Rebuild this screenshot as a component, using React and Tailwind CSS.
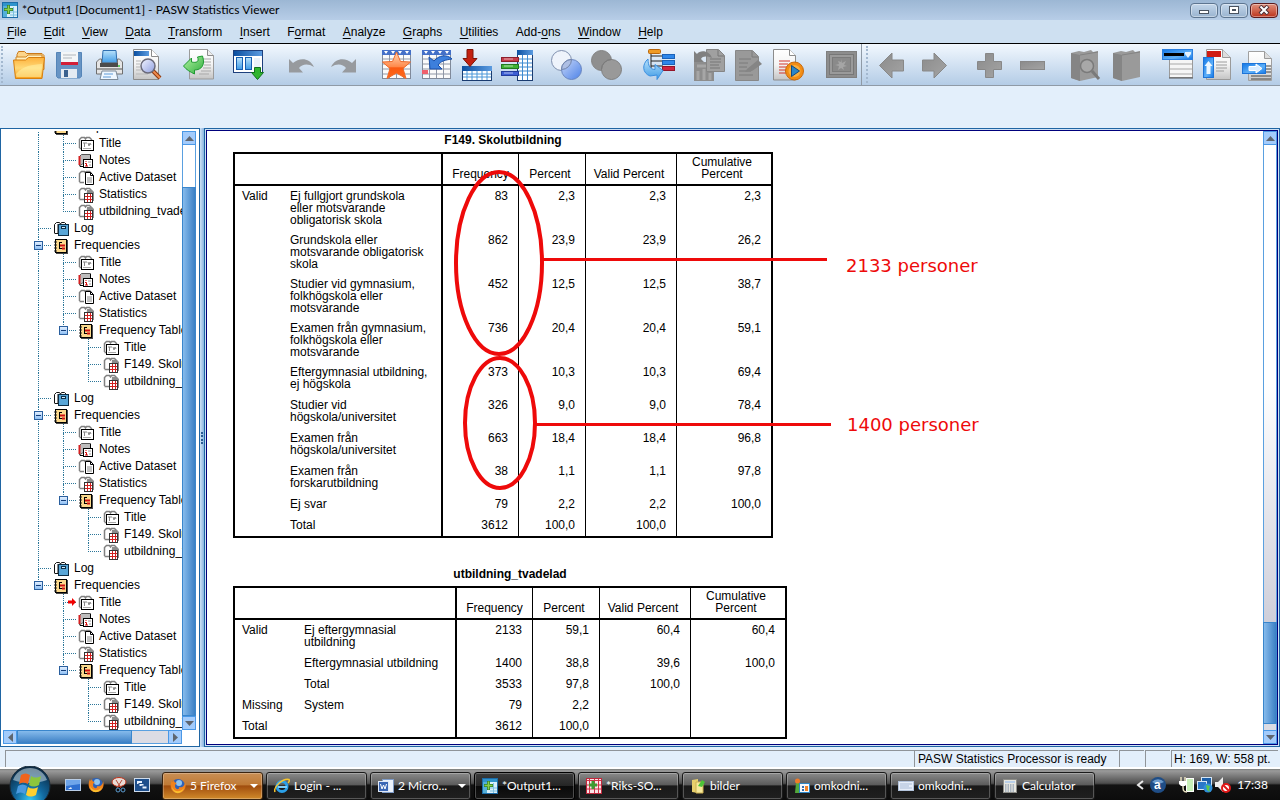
/**
 * Statistics output viewer
 * Outline tree on the left, pivot tables on the right, desktop taskbar below
 */

import { clsx } from "clsx";

const MENUS = [
  ["", "F", "ile"],
  ["", "E", "dit"],
  ["", "V", "iew"],
  ["", "D", "ata"],
  ["", "T", "ransform"],
  ["", "I", "nsert"],
  ["F", "o", "rmat"],
  ["", "A", "nalyze"],
  ["", "G", "raphs"],
  ["", "U", "tilities"],
  ["Add-", "o", "ns"],
  ["", "W", "indow"],
  ["", "H", "elp"],
];

/* ---------- Toolbar icons ---------- */

const Gradients = () => (
  <svg className="absolute h-0 w-0" aria-hidden="true">
    <defs>
      <linearGradient id="gOrange" x1="0" y1="0" x2="0" y2="1">
        <stop offset="0" stopColor="#fdb13c" />
        <stop offset="0.5" stopColor="#ffd978" />
        <stop offset="1" stopColor="#f9a11b" />
      </linearGradient>
      <linearGradient id="gPage" x1="0" y1="0" x2="0" y2="1">
        <stop offset="0" stopColor="#ffffff" />
        <stop offset="0.5" stopColor="#f4f4f4" />
        <stop offset="1" stopColor="#c4c4c4" />
      </linearGradient>
      <linearGradient id="gBlue" x1="0" y1="0" x2="1" y2="0">
        <stop offset="0" stopColor="#0b4fa0" />
        <stop offset="1" stopColor="#5b9be0" />
      </linearGradient>
      <linearGradient id="gSky" x1="0" y1="0" x2="0" y2="1">
        <stop offset="0" stopColor="#b9e2fb" />
        <stop offset="1" stopColor="#3f9be6" />
      </linearGradient>
      <linearGradient id="gBright" x1="0" y1="0" x2="1" y2="1">
        <stop offset="0" stopColor="#1377e6" />
        <stop offset="0.6" stopColor="#5fb0f8" />
        <stop offset="1" stopColor="#1377e6" />
      </linearGradient>
      <linearGradient id="gGreen" x1="0" y1="0" x2="1" y2="1">
        <stop offset="0" stopColor="#b4f3a4" />
        <stop offset="1" stopColor="#2fae3d" />
      </linearGradient>
      <linearGradient id="gStar" x1="0" y1="0" x2="0" y2="1">
        <stop offset="0" stopColor="#ffd9b8" />
        <stop offset="0.55" stopColor="#ff8a4c" />
        <stop offset="0.6" stopColor="#fb5a12" />
        <stop offset="1" stopColor="#ff6a1c" />
      </linearGradient>
      <linearGradient id="gGray" x1="0" y1="0" x2="1" y2="1">
        <stop offset="0" stopColor="#8b8b8b" />
        <stop offset="1" stopColor="#a4a4a4" />
      </linearGradient>
      <linearGradient id="gLens" x1="0" y1="0" x2="1" y2="1">
        <stop offset="0" stopColor="#f2f4ff" />
        <stop offset="1" stopColor="#8f9fe0" />
      </linearGradient>
      <linearGradient id="gCircle" x1="0" y1="0" x2="1" y2="1">
        <stop offset="0" stopColor="#c8d7f8" />
        <stop offset="1" stopColor="#4c82e8" />
      </linearGradient>
      <radialGradient id="gOrb" cx="0.5" cy="0.85" r="0.8">
        <stop offset="0" stopColor="#35c6f2" />
        <stop offset="0.45" stopColor="#1269a0" />
        <stop offset="1" stopColor="#0b2a44" />
      </radialGradient>
    </defs>
  </svg>
);

const OpenIcon = () => (
  <>
    <path d="M4 5.500l1.500-3h6l2 2h15.500l2 2v14H4z" fill="#fdd58a" stroke="#c9791b" />
    <path d="M3 8h10l2-2h14v14H3z" fill="#fff0c0" stroke="#cf8626" />
    <path d="M0.500 11h12l3-2.500h16L29 29.500H2.500z" fill="url(#gOrange)" stroke="#d57f10" />
    <path d="M3 25c8-9 16-9 26-10l-1 13H3.500z" fill="#fff3a8" opacity="0.55" />
  </>
);

const SaveIcon = () => (
  <>
    <path d="M3.500 3.500h25v24l-2 1.500H5l-1.500-1.500z" fill="#6794c4" stroke="#5585b8" />
    <rect x="8" y="3" width="17" height="12" fill="#f4f6f8" />
    <path d="M10 6h13M10 9h9" stroke="#b0b6bc" />
    <rect x="8" y="13" width="17" height="3" fill="#d31f38" />
    <rect x="8" y="20" width="16" height="9" fill="#e4ebf2" />
    <rect x="11" y="21" width="4" height="7" fill="#3a618f" />
  </>
);

const PrintIcon = () => (
  <>
    <path d="M9 14L10 1.500h13L24 14z" fill="url(#gSky)" stroke="#2f6fb0" />
    <path d="M3.500 13l3-3h2v4h16v-4h2l3 3v12h-26z" fill="#e5e5e5" stroke="#6f6f6f" />
    <rect x="7" y="14" width="18" height="4" fill="#4b4b4b" />
    <path d="M4 19h25v2H4z" fill="#9a9a9a" />
    <circle cx="26" cy="17" r="1" fill="#3ac83a" />
    <path d="M9 22h14l2 8.500H7z" fill="#eef7ff" stroke="#7c8a98" />
    <path d="M11 25h9M10 28h8" stroke="#5f9ad6" />
  </>
);

const PreviewIcon = () => (
  <>
    <path d="M0.500 0.500h18l7 7v23h-25z" fill="url(#gPage)" stroke="#8b8b8b" />
    <path d="M18.500 0.500v7h7" fill="#fff" stroke="#8b8b8b" />
    <rect x="1" y="2" width="15" height="5" fill="url(#gBlue)" />
    <path d="M3 12h5M3 15h4M3 18h4M3 21h5M3 25h12" stroke="#b7b7b7" />
    <path d="M20 22l7 7" stroke="#8d3a10" strokeWidth="4" />
    <path d="M20 22l7 7" stroke="#f08a4c" strokeWidth="2" />
    <circle cx="15" cy="17" r="7" fill="url(#gLens)" stroke="#6a6a7a" strokeWidth="1.500" />
  </>
);

const ExportIcon = () => (
  <>
    <path d="M6.500 0.500h18l6 6v23.500h-24z" fill="url(#gPage)" stroke="#9b9b9b" />
    <path d="M24.500 0.500v6h6" fill="#eee" stroke="#8b8b8b" />
    <path d="M20 10h8M21 13h7M21 16h7M20 19h8M18 22h10M16 25h10" stroke="#a9a9a9" />
    <path d="M0.500 17l8-8v4c5 1 8 0 6-5l5-1c3 9-1 14-8 14v4c-4-2-8-4-11-8z" fill="url(#gGreen)" stroke="#1f9a32" />
  </>
);

const DialogRecallIcon = () => (
  <>
    <rect x="0.500" y="1.500" width="29" height="22" fill="#fff" stroke="#1d3f7c" />
    <rect x="1" y="2" width="28" height="5" fill="url(#gBlue)" />
    <rect x="3.500" y="8.500" width="6" height="12" fill="url(#gSky)" stroke="#145db0" />
    <rect x="12.500" y="8.500" width="6" height="12" fill="url(#gSky)" stroke="#145db0" />
    <rect x="21" y="9" width="6" height="9" fill="#eaf1fa" />
    <path d="M21.500 18.500h6v5h3l-6 7-6-7h3z" fill="#30b52e" stroke="#10701c" />
  </>
);

const UndoIcon = () => (
  <path d="M4 10l4 4c6-5 16-6 21 4-6-4-12-3-15 1l4 4.500H4z" fill="#979a9e" />
);

const RedoIcon = () => (
  <path d="M29 10l-4 4c-6-5-16-6-21 4 6-4 12-3 15 1l-4 4.500h14z" fill="#979a9e" />
);

const GridBase = () => (
  <>
    <rect x="1.500" y="1.500" width="28" height="28" fill="#fbfbfb" stroke="#808a9a" />
    <path d="M2 10h27M2 15h27M2 20h27M2 25h27M8.500 5v24M15.500 5v24M22.500 5v24" stroke="#8f97a6" />
    <rect x="1" y="1" width="29" height="5" fill="#4470c8" />
    <path d="M3 2h4l-2 3zM10 2h4l-2 3zM17 2h4l-2 3zM24 2h4l-2 3z" fill="#fff" />
  </>
);

const StarIcon = () => (
  <>
    <GridBase />
    <path d="M15.500 3l4 9.500 10 .5-7.500 6.500 3 10-9.500-5.500-9.500 5.500 3-10L1.500 13l10-.5z" fill="url(#gStar)" stroke="#f06a2a" />
  </>
);

const GotoCaseIcon = () => (
  <>
    <GridBase />
    <rect x="1" y="21" width="6" height="4" fill="#f0606c" />
    <path d="M8 8l1 12h12l-4-4c3-4 7-5 14-6-5-5-13-4-18 2z" fill="#3d7fdc" stroke="#1a4fa8" />
  </>
);

const GotoVariableIcon = () => (
  <>
    <rect x="1.500" y="17.500" width="29" height="14" fill="#fff" stroke="#1b3c70" />
    <rect x="1" y="17" width="30" height="5" fill="url(#gBlue)" />
    <path d="M2 25h28M2 28h28M6 22v9M11 22v9M16 22v9M21 22v9M26 22v9" stroke="#4b97d8" />
    <path d="M6 0.500h6v9h4l-7 8-7-8h4z" fill="#c3200f" stroke="#7c1408" />
  </>
);

const VariablesIcon = () => (
  <>
    <rect x="16.500" y="1.500" width="15" height="30" fill="#fff" stroke="#1b3c70" />
    <rect x="16" y="1" width="16" height="5" fill="url(#gBlue)" />
    <path d="M17 10h14M17 14h14M17 18h14M17 22h14M17 26h14M21.500 6v25M26.500 6v25" stroke="#3f8bd0" />
    <rect x="0.500" y="8.500" width="17" height="4" fill="#c63a48" stroke="#8c1f2c" />
    <rect x="0.500" y="15.500" width="17" height="4" fill="#3fb234" stroke="#227a20" />
    <rect x="0.500" y="22.500" width="17" height="4" fill="#3e5fd4" stroke="#243d9c" />
    <path d="M3 10h9M3 17h9M3 24h9" stroke="#fff" opacity="0.6" />
  </>
);

const CirclesIcon = () => (
  <>
    <circle cx="10.500" cy="11.500" r="10" fill="#eef3fb" stroke="#7f8fae" />
    <circle cx="20.500" cy="20.500" r="10" fill="url(#gCircle)" stroke="#6a86c0" />
    <path d="M10.500 20.500a10 10 0 0 1 10-10a10 10 0 0 1-10 10z" fill="#aebfe4" stroke="#6f82a8" />
  </>
);

const CirclesGrayIcon = () => (
  <>
    <circle cx="10.500" cy="11.500" r="10" fill="#8f8f8f" stroke="#838383" />
    <circle cx="20.500" cy="20.500" r="10" fill="#999" stroke="#808080" />
    <path d="M10.500 20.500a10 10 0 0 1 10-10" fill="none" stroke="#7a7a7a" />
  </>
);

const SelectOutputIcon = () => (
  <>
    <path d="M8 5v14M8 7h12M8 12h12M8 17h12" stroke="#222" fill="none" />
    <rect x="5.500" y="0.500" width="12" height="4" rx="1" fill="#ef9a24" stroke="#b8660c" />
    <rect x="19.500" y="5.500" width="12" height="4" fill="#2d86ea" stroke="#1b62b8" />
    <rect x="19.500" y="11.500" width="12" height="4" fill="#2d86ea" stroke="#1b62b8" />
    <rect x="19.500" y="17.500" width="12" height="4" fill="#cf2440" stroke="#941428" />
    <path d="M5 10c-6 5-6 14 2 17l7-1v4.500l6-9-8-6v5c-5 0-7-4-7-10.500z" fill="url(#gSky)" stroke="#3a8fe0" />
  </>
);

const DesignateIcon = () => (
  <>
    <rect x="1" y="13" width="20" height="19" fill="#8d8d8d" />
    <path d="M4 17h14M5 22v9M11 20v11M17 24v7" stroke="#a6a6a6" strokeWidth="3" />
    <path d="M13.500 0.500h12l6 6v16h-18z" fill="#a0a0a0" stroke="#858585" />
    <path d="M25 1v6h6M17 10h11M17 13h11M17 16h9M17 19h10" stroke="#777" fill="none" />
    <path d="M1 2v11h10l-3-3c2-3 5-3 11-1-3-8-12-8-15-4z" fill="#808080" />
  </>
);

const EditGrayIcon = () => (
  <>
    <path d="M2.500 1.500h17l6 6v24h-23z" fill="#999" stroke="#888" />
    <path d="M19 2v6h6M6 10h12M6 14h9M6 18h8M6 22h12M6 26h14" stroke="#7b7b7b" fill="none" />
    <path d="M14 20l11-9 4 4-10 7-7 1z" fill="#858585" />
  </>
);

const RunIcon = () => (
  <>
    <path d="M0.500 0.500h16l6 6v24.500h-22z" fill="url(#gPage)" stroke="#8c8c8c" />
    <path d="M16.500 0.500v6h6" fill="#fff" stroke="#8c8c8c" />
    <path d="M6 12h11M6 15h9M6 18h8M6 21h7M6 24h8" stroke="#d2352c" />
    <circle cx="21.500" cy="22" r="9" fill="#f28c14" stroke="#c9690a" />
    <circle cx="21.500" cy="22" r="6" fill="#f9b040" />
    <path d="M18.500 16.500v11l8-5.500z" fill="#2c86c8" stroke="#124a80" />
  </>
);

const PictureIcon = () => (
  <>
    <rect x="1.500" y="2.500" width="30" height="26" fill="#8d8d8d" stroke="#7f7f7f" />
    <rect x="4.500" y="5.500" width="24" height="20" fill="#9a9a9a" stroke="#777" />
    <rect x="7.500" y="8.500" width="18" height="14" fill="#8a8a8a" stroke="#7b7b7b" />
    <path d="M16 10l1 4 4-2-2 4 3 1-4 1 1 3-3-2-3 2 1-4-4-1 4-1-1-3 3 1z" fill="#a5a5a5" />
  </>
);

const LeftIcon = () => (
  <path d="M3.500 16.500L16 4v7h11.500v11H16v7z" fill="url(#gGray)" stroke="#888" />
);
const RightIcon = () => (
  <path d="M28.500 16.500L16 4v7H4.500v11H16v7z" fill="url(#gGray)" stroke="#888" />
);
const PlusIcon = () => (
  <path d="M11.500 4.500h8v8h8v8h-8v8h-8v-8h-8v-8h8z" fill="url(#gGray)" stroke="#888" />
);
const MinusIcon = () => (
  <rect x="4.500" y="12.500" width="24" height="8" fill="url(#gGray)" stroke="#888" />
);

const BookIcon = () => (
  <>
    <path d="M1 4l8-2 5 1 7-2 2 2 5-1v26l-18 4-9-3z" fill="#9a9a9a" />
    <path d="M1 4l9 2v26l-9-3z" fill="#858585" />
    <path d="M10 6l18-3" stroke="#838383" />
  </>
);
const BookFindIcon = () => (
  <>
    <BookIcon />
    <circle cx="17" cy="17" r="6.500" fill="#a8a8a8" stroke="#7a7a7a" strokeWidth="1.500" />
    <path d="M22 22l7 8" stroke="#7a7a7a" strokeWidth="3" />
  </>
);

const HeadingIcon = () => (
  <>
    <rect x="7.500" y="10.500" width="23" height="18" fill="#f6f6f6" stroke="#9a9a9a" />
    <path d="M8 15h22M8 20h22M8 25h22" stroke="#a8a8a8" />
    <path d="M7 29h24" stroke="#555" />
    <rect x="0.500" y="0.500" width="30" height="10" fill="url(#gBright)" stroke="#2a7fe0" />
    <rect x="2" y="4" width="20" height="3" fill="#000" />
    <path d="M23 3h6v2l-3 4-3-4z" fill="#e3f2ff" />
  </>
);
const TitleDocIcon = () => (
  <>
    <path d="M4.500 0.500h16l8 8v22h-24z" fill="url(#gPage)" stroke="#9a9a9a" />
    <path d="M20.500 0.500v8h8" fill="#ddd" stroke="#9a9a9a" />
    <rect x="5" y="2" width="14" height="6" fill="#d01c14" />
    <path d="M14 13h11M14 16h11M14 19h11M14 22h8" stroke="#9c9c9c" />
    <rect x="1.500" y="8.500" width="10" height="20" fill="url(#gBright)" stroke="#1d74d8" />
    <path d="M6.500 12l4 5h-2v8h-4v-8h-2z" fill="#ecf6ff" />
  </>
);
const TextDocIcon = () => (
  <>
    <path d="M6.500 2.500h16l7 7v22h-23z" fill="url(#gPage)" stroke="#a0a0a0" />
    <path d="M22.500 2.500v7h7" fill="#ddd" stroke="#9a9a9a" />
    <path d="M24 17h5M24 20h5M24 23h5M9 27h20M9 30h20" stroke="#444" />
    <rect x="0.500" y="14.500" width="23" height="10" fill="url(#gBright)" stroke="#1d74d8" />
    <path d="M7 17.500h7v-2.500l6 4.500-6 4.500v-2.500H7z" fill="#d9ecff" stroke="#fff" />
  </>
);

const MAIN_TOOLS = [
  { gap: "", tools: [["Open", OpenIcon], ["Save", SaveIcon], ["Print", PrintIcon], ["Print preview", PreviewIcon]] },
  { gap: "ml-[18px]", tools: [["Export", ExportIcon]] },
  { gap: "ml-[18px]", tools: [["Recall dialog", DialogRecallIcon]] },
  { gap: "ml-5", tools: [["Undo", UndoIcon], ["Redo", RedoIcon]], wide: true },
  { gap: "ml-[22px]", tools: [["Go to data", StarIcon], ["Go to case", GotoCaseIcon], ["Go to variable", GotoVariableIcon], ["Variables", VariablesIcon]] },
  { gap: "ml-[18px]", tools: [["Use sets", CirclesIcon], ["Show all variables", CirclesGrayIcon]] },
  { gap: "ml-5", tools: [["Select last output", SelectOutputIcon]] },
  { gap: "ml-[18px]", tools: [["Designate window", DesignateIcon], ["Edit script", EditGrayIcon], ["Run script", RunIcon]] },
  { gap: "ml-5", tools: [["Picture", PictureIcon]] },
];

const OUTLINE_TOOLS = [
  { gap: "", tools: [["Promote", LeftIcon], ["Demote", RightIcon]], wide: true },
  { gap: "ml-6", tools: [["Expand", PlusIcon], ["Collapse", MinusIcon]], wide: true },
  { gap: "ml-[22px]", tools: [["Show", BookFindIcon], ["Hide", BookIcon]], wide: true },
  { gap: "ml-[18px]", tools: [["Insert heading", HeadingIcon], ["Insert title", TitleDocIcon], ["Insert text", TextDocIcon]] },
];

const ToolGroups = ({ groups }) =>
  groups.map((group, index) => (
    <div key={index} className={clsx("flex shrink-0", group.gap, group.wide ? "gap-[10px]" : "gap-2")}>
      {group.tools.map(([label, Icon]) => (
        <button key={label} aria-label={label} className="h-8 w-8">
          <svg viewBox="0 0 32 32" className="h-8 w-8 overflow-visible" fill="none">
            <Icon />
          </svg>
        </button>
      ))}
    </div>
  ));

const Grip = () => (
  <span className="my-[2px] ml-px w-[2px] shrink-0 self-stretch border-l-2 border-dotted border-[#a3b8cf]" />
);

/* ---------- Outline tree ---------- */

const BookBack = () => (
  <path d="M1.500 12V3.500l2-2h3l1 1.500 1-1.500h3l2 2V6M1.500 12.500H6" fill="none" stroke="#808080" strokeWidth="1.500" />
);

const TREE_ICONS = {
  title: (
    <>
      <BookBack />
      <rect x="3.500" y="4.500" width="12" height="10" fill="#fff" stroke="#000" />
      <path d="M5 7h4M6.500 7v4M10 7l1 3 1-3 1 2" stroke="#888" fill="none" />
      <path d="M5 12.500h8" stroke="#aaa" />
    </>
  ),
  notes: (
    <>
      <path d="M1.500 13V3.500l2-2h9V11h-8z" fill="#bdbdbd" stroke="#555" />
      <path d="M1.500 12V3" stroke="#d42020" strokeWidth="2" />
      <path d="M2 13.500h3M12.500 2v4" stroke="#000" />
      <rect x="5.500" y="6.500" width="9" height="8" fill="#fff" stroke="#000" />
      <path d="M8 8v1M7 10.500h1.500V13M7 13h3" stroke="#d00000" fill="none" />
      <path d="M10 9h3M11 12h2" stroke="#999" />
    </>
  ),
  dataset: (
    <>
      <BookBack />
      <path d="M7.500 2.500h5l3 3v9h-8z" fill="#fff" stroke="#000" />
      <path d="M12.500 2.500v3h3" fill="none" stroke="#000" />
      <path d="M9 8h5M9 10h5M9 12h5" stroke="#888" />
    </>
  ),
  table: (
    <>
      <BookBack />
      <path d="M9 3h5l2 2v9H8z" fill="#8c8c8c" />
      <rect x="6.500" y="6.500" width="8" height="9" fill="#fff" stroke="#333" />
      <path d="M7 9.500h7M7 12.500h7M9.500 7v8M12.500 7v8" stroke="#d02020" />
    </>
  ),
  log: (
    <>
      <path d="M1.500 12V3.500l2-2h3l1 1.500 1-1.500h3l2 2V6M1.500 12.500H5M5 3v10" fill="none" stroke="#111" />
      <rect x="5.500" y="3.500" width="10" height="11" fill="#58a6d8" stroke="#0c2c44" />
      <rect x="8.500" y="5.500" width="4" height="2" fill="#d8efff" stroke="#0c2c44" />
    </>
  ),
  procedure: (
    <>
      <rect x="3" y="2" width="12" height="14" fill="#4a4a4a" />
      <rect x="2.500" y="1.500" width="11" height="13" fill="#fcd98c" stroke="#000" />
      <path d="M1 4h3M1 7h3M1 10h3M1 13h3" stroke="#222" />
      <path d="M6.500 4v7M6 4.500h3M6 10.500h3" stroke="#000" fill="none" />
      <path d="M7 7.500h5M9 10.500h3" stroke="#d01010" strokeWidth="2" />
    </>
  ),
};

const leaves = [
  { icon: "title", label: "Title" },
  { icon: "notes", label: "Notes" },
  { icon: "dataset", label: "Active Dataset" },
  { icon: "table", label: "Statistics" },
];

const frequencyRun = (active) => ({
  icon: "procedure",
  label: "Frequencies",
  children: [
    ...leaves.map((leaf, i) => (active && i === 0 ? { ...leaf, active } : leaf)),
    {
      icon: "procedure",
      label: "Frequency Table",
      children: [
        { icon: "title", label: "Title" },
        { icon: "table", label: "F149. Skolutbildning" },
        { icon: "table", label: "utbildning_tvadelad" },
      ],
    },
  ],
});

const OUTLINE = [
  { icon: "procedure", label: "Frequencies", children: [...leaves, { icon: "table", label: "utbildning_tvadelad" }] },
  { icon: "log", label: "Log" },
  frequencyRun(false),
  { icon: "log", label: "Log" },
  frequencyRun(false),
  { icon: "log", label: "Log" },
  frequencyRun(true),
];

const TreeNodes = ({ nodes, guides = [] }) =>
  nodes.map((node, index) => {
    const last = index === nodes.length - 1;
    return (
      <li key={index}>
        <div className="flex h-[17px] items-center whitespace-nowrap">
          {guides.map((open, depth) => (
            <span key={depth} className="h-full w-[25px] shrink-0 pl-3">
              {open && <span className="block h-full border-l border-dotted border-[#2b7699]" />}
            </span>
          ))}
          <span className="relative h-full w-[25px] shrink-0 pl-3">
            <span className="block h-[9px] border-b border-l border-dotted border-[#2b7699]" />
            {!last && <span className="block h-2 border-l border-dotted border-[#2b7699]" />}
            {node.children && (
              <button
                aria-label={`Collapse ${node.label}`}
                className="absolute left-2 top-1 flex h-[9px] w-[9px] items-center justify-center border border-[#2a5f9e] bg-gradient-to-b from-[#e2efff] to-[#8fc0f4]"
              >
                <span className="h-px w-[5px] bg-[#123c78]" />
              </button>
            )}
            {node.active && (
              <svg viewBox="0 0 8 8" className="absolute left-[17px] top-1 h-2 w-2">
                <path d="M0 2.500h4V0l4 4-4 4V5.500H0z" fill="#f00000" />
              </svg>
            )}
          </span>
          <svg viewBox="0 0 17 16" className="ml-[2px] h-4 w-[17px] shrink-0">
            {TREE_ICONS[node.icon]}
          </svg>
          <span className="ml-1 text-xs leading-[17px]">{node.label}</span>
        </div>
        {node.children && (
          <ul>
            <TreeNodes nodes={node.children} guides={[...guides, !last]} />
          </ul>
        )}
      </li>
    );
  });

/* ---------- Scroll bars ---------- */

const ARROWS = {
  up: "M0 7l4.500-5L9 7z",
  down: "M0 2l4.500 5L9 2z",
  left: "M7 0L2 4.500 7 9z",
  right: "M2 0l5 4.500L2 9z",
};

const ScrollButton = ({ dir }) => (
  <button
    aria-label={`Scroll ${dir}`}
    className="flex h-[14px] w-[14px] shrink-0 items-center justify-center border border-[#4a98e6] bg-[#a3cbfb]"
  >
    <svg viewBox="0 0 9 9" className="h-[9px] w-[9px] shrink-0">
      <path d={ARROWS[dir]} fill="#5f6670" />
    </svg>
  </button>
);

/* ---------- Pivot tables ---------- */

const SKOLUTBILDNING = {
  title: "F149. Skolutbildning",
  stub: "w-[48px]",
  width: "w-[540px]",
  rows: [
    ["Valid", ["Ej fullgjort grundskola", "eller motsvarande", "obligatorisk skola"], "83", "2,3", "2,3", "2,3"],
    ["", ["Grundskola eller", "motsvarande obligatorisk", "skola"], "862", "23,9", "23,9", "26,2"],
    ["", ["Studier vid gymnasium,", "folkhögskola eller", "motsvarande"], "452", "12,5", "12,5", "38,7"],
    ["", ["Examen från gymnasium,", "folkhögskola eller", "motsvarande"], "736", "20,4", "20,4", "59,1"],
    ["", ["Eftergymnasial utbildning,", "ej högskola"], "373", "10,3", "10,3", "69,4"],
    ["", ["Studier vid", "högskola/universitet"], "326", "9,0", "9,0", "78,4"],
    ["", ["Examen från", "högskola/universitet"], "663", "18,4", "18,4", "96,8"],
    ["", ["Examen från", "forskarutbildning"], "38", "1,1", "1,1", "97,8"],
    ["", ["Ej svar"], "79", "2,2", "2,2", "100,0"],
    ["", ["Total"], "3612", "100,0", "100,0", ""],
  ],
};

const TVADELAD = {
  title: "utbildning_tvadelad",
  stub: "w-[62px]",
  width: "w-[554px]",
  rows: [
    ["Valid", ["Ej eftergymnasial", "utbildning"], "2133", "59,1", "60,4", "60,4"],
    ["", ["Eftergymnasial utbildning"], "1400", "38,8", "39,6", "100,0"],
    ["", ["Total"], "3533", "97,8", "100,0", ""],
    ["Missing", ["System"], "79", "2,2", "", ""],
    ["Total", [""], "3612", "100,0", "", ""],
  ],
};

const ROW_HEIGHTS = { 1: "h-[21px]", 2: "h-[33px]", 3: "h-[44px]" };

const PivotTable = ({ table }) => (
  <table
    className={clsx(
      "table-fixed border-separate border-spacing-0 border-2 border-black text-xs leading-3",
      table.width
    )}
  >
    <caption className="h-[18px] text-center font-bold leading-3">{table.title}</caption>
    <colgroup>
      <col className={table.stub} />
      <col className="w-[160px]" />
      <col className="w-[76px]" />
      <col className="w-[67px]" />
      <col className="w-[91px]" />
      <col className="w-[94px]" />
    </colgroup>
    <thead>
      <tr className="h-8 align-bottom">
        <td colSpan={2} className="border-b-2 border-r-2 border-black" />
        <th className="border-b-2 border-r border-black pb-1 font-normal">Frequency</th>
        <th className="border-b-2 border-r border-black pb-1 pr-1 font-normal">Percent</th>
        <th className="border-b-2 border-r border-black pb-1 pr-1 font-normal">Valid Percent</th>
        <th className="border-b-2 border-black pb-1 pr-1 font-normal">
          Cumulative
          <br />
          Percent
        </th>
      </tr>
    </thead>
    <tbody>
      {table.rows.map(([group, label, ...values], index) => (
        <tr key={index} className={clsx("align-top", ROW_HEIGHTS[label.length])}>
          <th className="pl-[7px] pt-1 text-left font-normal">{group}</th>
          <th className="whitespace-nowrap border-r-2 border-black pl-[7px] pt-1 text-left font-normal">
            {label.map((line) => (
              <span key={line} className="block">
                {line}
              </span>
            ))}
          </th>
          {values.map((value, col) => (
            <td
              key={col}
              className={clsx("pr-[10px] pt-1 text-right", col < 3 && "border-r border-black")}
            >
              {value}
            </td>
          ))}
        </tr>
      ))}
    </tbody>
  </table>
);

/* Red marker circles drawn on top of the first table */
const Annotations = () => (
  <div className="pointer-events-none absolute left-0 top-0 font-['DejaVu_Sans',sans-serif] text-lg leading-5 text-[#ee0a0a]">
    <svg viewBox="0 0 640 380" className="h-[380px] w-[640px]" fill="none" stroke="#ee0a0a">
      <ellipse cx="292" cy="132" rx="43" ry="91" strokeWidth="4" />
      <ellipse cx="293" cy="292" rx="35" ry="65" strokeWidth="4" />
      <path d="M335 128.500h285M328 293.500h296" strokeWidth="3" />
    </svg>
    <span className="absolute left-[639px] top-[125px] whitespace-nowrap">2133 personer</span>
    <span className="absolute left-[640px] top-[284px] whitespace-nowrap">1400 personer</span>
  </div>
);

/* ---------- Taskbar ---------- */

const Firefox = () => (
  <>
    <circle cx="8" cy="8" r="7" fill="#2f62b8" />
    <circle cx="9" cy="5" r="3" fill="#8fc4f0" />
    <path d="M2 2c-3 6-1 13 6 13 6 0 9-6 7-11 0 4-3 6-6 5 1 3-4 3-4-1 0-2 1-2 2-3C5 5 4 4 4 2L2.500 4z" fill="#f0821c" />
    <path d="M2 9c2 5 8 6 12 1-2 7-11 7-12-1z" fill="#fbc02d" />
  </>
);
const ShowDesktop = () => (
  <>
    <rect x="0.500" y="2.500" width="15" height="11" fill="#2f6fd0" stroke="#b9cde6" />
    <path d="M1 3h14v4L1 9z" fill="#6fa5ea" />
    <path d="M3 12l3-2 1 2z" fill="#e8eef6" />
  </>
);
const Snip = () => (
  <>
    <ellipse cx="8" cy="5" rx="7" ry="4.500" fill="#e9dcd6" stroke="#c0341c" />
    <path d="M5 3l5 8M11 3L6 11" stroke="#b84a38" />
    <circle cx="7" cy="13" r="2" fill="none" stroke="#5b9bd0" />
    <circle cx="12" cy="13" r="2" fill="none" stroke="#5b9bd0" />
  </>
);
const Switcher = () => (
  <>
    <rect x="0.500" y="1.500" width="15" height="13" fill="#1e4f8c" stroke="#cfdcec" />
    <rect x="3" y="4" width="5" height="3" fill="#eaf3ff" />
    <rect x="5" y="6.500" width="5" height="3" fill="#eaf3ff" stroke="#1e4f8c" />
    <rect x="8" y="9" width="5" height="3" fill="#eaf3ff" stroke="#1e4f8c" />
  </>
);
const Explorer = () => (
  <>
    <circle cx="8" cy="8.500" r="5" fill="none" stroke="#2ba0e8" strokeWidth="3" />
    <path d="M4 9h9" stroke="#7fd0fa" strokeWidth="2" />
    <path d="M1 14C-1 9 9 0 15 1.500 16 3 15 4 14 5" fill="none" stroke="#f6c530" strokeWidth="1.500" />
  </>
);
const Word = () => (
  <>
    <rect x="4.500" y="1.500" width="11" height="13" fill="#eaf1fb" stroke="#7f9cc8" />
    <rect x="0.500" y="3.500" width="10" height="10" fill="#3a66b4" stroke="#dfe8f6" />
    <path d="M2.500 6l1.500 5 1.500-4L7 11l1.500-5" fill="none" stroke="#fff" />
  </>
);
const Viewer = () => (
  <>
    <rect x="0.500" y="0.500" width="15" height="15" fill="#d9effa" stroke="#1c6ca8" />
    <path d="M1 1h14v3H1z" fill="#2f94cc" />
    <path d="M1 4h4v11H1z" fill="#53afd8" />
    <path d="M8 10h7M8 13h7M11.500 5v10" stroke="#7cc0e0" />
    <path d="M6.500 3v9M2 7.500h9" stroke="#2f7f2c" strokeWidth="3" />
    <path d="M6.500 3.500v8M2.500 7.500h8" stroke="#8bd048" strokeWidth="1.500" />
  </>
);
const DataEditor = () => (
  <>
    <rect x="0.500" y="0.500" width="15" height="15" fill="#fbe3e6" stroke="#c0283c" />
    <path d="M1 2.500h14M1 7h14M1 11h14M3.500 1v14M8.500 1v14M12.500 1v14" stroke="#cf3148" />
    <path d="M7 3v8M3 7h8" stroke="#3c9c30" strokeWidth="3" />
  </>
);
const Folder = () => (
  <>
    <path d="M2 2l6-1v14l-6-1z" fill="#e8cf6c" />
    <path d="M6 4h7v11H6z" fill="#f7ea9c" stroke="#cdb050" />
    <path d="M8 8l4-6 3 2-3 5z" fill="#4cc437" />
  </>
);
const Paint = () => (
  <>
    <path d="M2 5h4l1 10H1z" fill="#52a83c" />
    <circle cx="3.500" cy="3" r="2.500" fill="#f07a28" />
    <rect x="5.500" y="5.500" width="10" height="9" fill="#f4f8fc" stroke="#2e86c6" />
    <path d="M8 8h2v2H8zM8 11h2v2H8z" fill="#306cb0" />
    <path d="M11 8h3v5h-3z" fill="#f08428" />
  </>
);
const Sheet = () => (
  <>
    <rect x="0.500" y="3.500" width="15" height="9" fill="#e6edf8" stroke="#b4c4dc" />
    <path d="M2 6h12M2 8h9M2 10h12" stroke="#a9bbd6" />
  </>
);
const CalculatorIcon = () => (
  <>
    <rect x="1.500" y="1.500" width="13" height="13" fill="#e7e7e0" stroke="#8d8d88" />
    <rect x="3" y="3" width="10" height="2" fill="#b9cfe8" />
    <path d="M3 7h10M3 9h10M3 11h10M3 13h10" stroke="#6f83a0" strokeDasharray="1.500 1" />
  </>
);

const QUICK_LAUNCH = [
  ["Show desktop", ShowDesktop],
  ["Firefox", Firefox],
  ["Snipping Tool", Snip],
  ["Switch windows", Switcher],
];

const TASKS = [
  { label: "5 Firefox", Icon: Firefox, tone: "hot", grouped: true },
  { label: "Login - ...", Icon: Explorer },
  { label: "2 Micro...", Icon: Word, grouped: true },
  { label: "*Output1...", Icon: Viewer, tone: "active" },
  { label: "*Riks-SO...", Icon: DataEditor },
  { label: "bilder", Icon: Folder },
  { label: "omkodni...", Icon: Paint },
  { label: "omkodni...", Icon: Sheet },
  { label: "Calculator", Icon: CalculatorIcon },
];

const TASK_TONES = {
  hot: "border-[#3a2410] bg-[linear-gradient(to_bottom,#c98f55_0%,#c07a35_45%,#a04d0e_50%,#d18a2a_100%)]",
  active: "border-black bg-[linear-gradient(to_bottom,#3c3c3c_0%,#262626_48%,#0a0a0a_52%,#151515_100%)]",
  normal: "border-[#1a1a1a] bg-[linear-gradient(to_bottom,#8a8a8a_0%,#5c5c5c_45%,#191919_50%,#202020_100%)]",
};

const Taskbar = () => (
  <footer className="flex h-[31px] shrink-0 items-center overflow-visible bg-[linear-gradient(to_bottom,#7b7d7c_0%,#9a9a9a_6%,#4d4d4d_46%,#121212_52%,#0c0c0c_100%)] font-['Lato','Noto_Sans',sans-serif] text-xs text-white">
    <button aria-label="Start" className="relative -mt-[3px] ml-[9px] h-[34px] w-[42px] shrink-0 overflow-hidden">
      <svg viewBox="0 0 42 34" className="h-[34px] w-[42px]">
        <circle cx="21" cy="20" r="20" fill="url(#gOrb)" stroke="#1b2d3c" />
        <path d="M4 14a18 18 0 0 1 34 0c-10 4-24 4-34 0z" fill="#cfe0ea" opacity="0.55" />
        <path d="M12 9c3-2 6-2 9 0l-2 9c-3-2-6-2-9 0z" fill="#f0641e" />
        <path d="M22 10c3 2 6 2 10 0l-2 9c-4 2-7 2-10 0z" fill="#8cc63c" />
        <path d="M9 20c3-2 6-2 9 0l-2 8c-3-2-6-2-9 0z" fill="#4a9ae0" />
        <path d="M19 21c3 2 6 2 10 0l-2 8c-4 2-7 2-10 0z" fill="#ffcf30" />
      </svg>
    </button>
    <nav className="ml-[14px] flex shrink-0 gap-[7px]">
      {QUICK_LAUNCH.map(([label, Icon]) => (
        <button key={label} aria-label={label} className="h-4 w-4">
          <svg viewBox="0 0 16 16" className="h-4 w-4">
            <Icon />
          </svg>
        </button>
      ))}
    </nav>
    <div className="ml-3 flex min-w-0 flex-1 gap-[3px] pt-[2px]">
      {TASKS.map(({ label, Icon, tone = "normal", grouped }, index) => (
        <button
          key={index}
          className={clsx(
            "flex h-7 w-[101px] items-center rounded-[3px] border pl-[7px] pr-1 shadow-[inset_0_0_0_1px_rgba(255,255,255,0.25)]",
            TASK_TONES[tone]
          )}
        >
          <svg viewBox="0 0 16 16" className="h-4 w-4 shrink-0">
            <Icon />
          </svg>
          <span className="ml-1 flex-1 whitespace-nowrap text-left">{label}</span>
          {grouped && (
            <svg viewBox="0 0 8 4" className="h-1 w-2 shrink-0">
              <path d="M0 0h8L4 4z" fill="#fff" />
            </svg>
          )}
        </button>
      ))}
    </div>
    <div className="flex shrink-0 items-center pr-3">
      <svg viewBox="0 0 8 10" className="h-[10px] w-2">
        <path d="M7 1L2 5l5 4" fill="none" stroke="#e8e8e8" strokeWidth="2" />
      </svg>
      <svg viewBox="0 0 16 16" className="ml-[6px] h-4 w-4">
        <circle cx="8" cy="8" r="8" fill="#1f4d86" />
        <path d="M2 5a8 8 0 0 1 12 0c-4 2-8 2-12 0z" fill="#6e9ccc" />
        <text x="4" y="12" fontSize="12" fontWeight="bold" fill="#fff" fontFamily="Liberation Sans">
          a
        </text>
      </svg>
      <svg viewBox="0 0 16 16" className="ml-[13px] h-4 w-4">
        <rect x="7.500" y="1.500" width="7" height="13" fill="#c8f0b8" stroke="#fff" />
        <path d="M2 0v4M6 0v4M4 9c0 4 0 6 4 6" stroke="#e8e0c0" fill="none" strokeWidth="1.500" />
        <path d="M0 4h8v3L6 9H2L0 7z" fill="#fff" />
      </svg>
      <svg viewBox="0 0 16 16" className="ml-[2px] h-4 w-4">
        <rect x="4.500" y="0.500" width="10" height="8" fill="#1c5fa8" stroke="#d6e6f4" />
        <rect x="0.500" y="4.500" width="9" height="8" fill="#2a78c8" stroke="#d6e6f4" />
        <circle cx="11" cy="11" r="4.500" fill="#2f8fd8" />
        <path d="M9 8l4 1-1 3 1 3-3-2z" fill="#5ac84a" />
      </svg>
      <svg viewBox="0 0 16 16" className="ml-[2px] h-4 w-4">
        <path d="M0 5h3l5-5v15l-5-5H0z" fill="#eee" />
        <circle cx="11" cy="11" r="4" fill="#fff" stroke="#e01818" strokeWidth="2" />
        <path d="M8 8l6 6" stroke="#e01818" strokeWidth="2" />
      </svg>
      <time className="ml-[6px]">17:38</time>
    </div>
  </footer>
);

/* ---------- Page ---------- */

const WindowButton = ({ label, close, children }) => (
  <button
    aria-label={label}
    className={clsx(
      "flex h-[15px] w-7 items-center justify-center rounded-sm border shadow-[inset_0_0_0_1px_rgba(255,255,255,0.4)]",
      close
        ? "border-[#5a1a1c] bg-gradient-to-b from-[#e0907c] to-[#bb3018]"
        : "border-[#5d7590] bg-gradient-to-b from-[#c3d6ea] to-[#9ab4d0]"
    )}
  >
    <svg viewBox="0 0 12 10" className="h-[10px] w-3" fill="none">
      {children}
    </svg>
  </button>
);

export const App = () => (
  <div className="flex h-screen w-full flex-col overflow-hidden bg-[#e3effb] font-['Liberation_Sans',Arial,sans-serif] text-xs text-black">
    <Gradients />

    {/* Title bar */}
    <header className="flex h-5 shrink-0 items-center bg-gradient-to-b from-[#9cb7d4] to-[#b7cde7] pl-[2px] pr-[2px]">
      <svg viewBox="0 0 16 16" className="h-4 w-4">
        <Viewer />
      </svg>
      <h1 className="ml-1 flex-1 font-['Lato','Noto_Sans',sans-serif] text-xs">
        *Output1 [Document1] - PASW Statistics Viewer
      </h1>
      <div className="flex gap-[2px]">
        <WindowButton label="Minimize">
          <rect x="1.500" y="5.500" width="9" height="3" fill="#fff" stroke="#4a5360" />
        </WindowButton>
        <WindowButton label="Maximize">
          <rect x="1.500" y="1.500" width="9" height="7" fill="#fff" stroke="#4a5360" />
          <rect x="4.500" y="4.500" width="3" height="1" fill="#9ab4d0" stroke="#4a5360" />
        </WindowButton>
        <WindowButton label="Close" close>
          <path d="M2 1l8 8M10 1L2 9" stroke="#4a3038" strokeWidth="4" />
          <path d="M2.500 1.500l7 7M9.500 1.500l-7 7" stroke="#fff" strokeWidth="2" />
        </WindowButton>
      </div>
    </header>

    {/* Menu bar */}
    <nav className="flex h-6 shrink-0 items-center border-b border-black bg-[#cee0f1] pl-[7px]">
      <div className="flex w-[656px] justify-between">
        {MENUS.map(([before, key, after]) => (
          <button key={before + key + after} className="whitespace-nowrap">
            {before}
            <span className="underline underline-offset-2">{key}</span>
            {after}
          </button>
        ))}
      </div>
    </nav>

    {/* Toolbars */}
    <div className="flex h-[42px] shrink-0 items-center border-b border-[#8f9aa6] bg-gradient-to-b from-[#f2f8fe] to-[#b4cce6]">
      <div className="flex items-center self-stretch border-r border-[#8f9aa6] pr-1">
        <Grip />
        <div className="w-[10px] shrink-0" />
        <ToolGroups groups={MAIN_TOOLS} />
      </div>
      <div className="flex min-w-0 flex-1 items-center self-stretch pl-[3px]">
        <Grip />
        <div className="w-2 shrink-0" />
        <ToolGroups groups={OUTLINE_TOOLS} />
      </div>
    </div>

    {/* Outline and document */}
    <main className="mt-[42px] flex min-h-0 flex-1">
      <aside className="flex w-[200px] shrink-0 flex-col border border-[#1f65a3] bg-white p-[2px] pr-[3px]">
        <div className="flex min-h-0 flex-1">
          <div className="flex min-w-0 flex-1 flex-col justify-end overflow-hidden pl-[23px]">
            <ul>
              <TreeNodes nodes={OUTLINE} />
            </ul>
          </div>
          <div className="flex w-[14px] shrink-0 flex-col">
            <ScrollButton dir="up" />
            <div className="h-[42px] border-x border-[#5aa0e0] bg-white" />
            <div className="flex-1 border border-[#3a86cc] bg-gradient-to-r from-[#86bbec] to-[#3a7fc4]" />
            <ScrollButton dir="down" />
          </div>
        </div>
        <div className="mr-[14px] flex h-[14px] shrink-0">
          <ScrollButton dir="left" />
          <div className="flex-1 border border-[#3a86cc] bg-gradient-to-b from-[#86bbec] to-[#3a7fc4]" />
          <div className="w-9 border-y border-[#5aa0e0] bg-[#dcdce4]" />
          <ScrollButton dir="right" />
        </div>
      </aside>

      {/* Splitter */}
      <div className="flex w-1 shrink-0 items-center justify-center bg-gradient-to-r from-[#cfe2f6] to-[#8ab4e0]">
        <span className="h-3 border-l-2 border-dotted border-[#2a5c94]" />
      </div>

      <section className="flex min-w-0 flex-1 border border-[#1f65a3] bg-[#cfe2f6] p-px">
        <div className="flex min-w-0 flex-1 border border-[#00007c] bg-white">
          <div className="relative min-w-0 flex-1 overflow-hidden pl-[26px] pt-[3px]">
            <PivotTable table={SKOLUTBILDNING} />
            <div className="mt-[30px]">
              <PivotTable table={TVADELAD} />
            </div>
            <Annotations />
          </div>
          <div className="flex w-[14px] shrink-0 flex-col">
            <ScrollButton dir="up" />
            <div className="flex-1 border-x border-[#5aa0e0] bg-gradient-to-b from-white via-white to-[#cfcfda]" />
            <div className="h-[102px] border border-[#3a86cc] bg-gradient-to-r from-[#86bbec] to-[#3a7fc4]" />
            <div className="h-[6px] border-x border-[#5aa0e0] bg-[#dcdce4]" />
            <ScrollButton dir="down" />
          </div>
        </div>
      </section>
    </main>

    {/* Status bar */}
    <div className="flex h-[22px] shrink-0 items-stretch border-b-2 border-white pl-[5px] pr-[2px] pt-[3px]">
      <div className="flex-1 border-l border-t border-[#8f9499]" />
      <div className="flex w-[204px] items-center border-l border-t border-[#8f9499] pl-[3px]">
        PASW Statistics Processor is ready
      </div>
      <div className="ml-px w-[25px] border-l border-t border-[#8f9499]" />
      <div className="ml-px w-[25px] border-l border-t border-[#8f9499]" />
      <div className="ml-px flex w-[107px] items-center whitespace-nowrap border-l border-t border-[#8f9499] pl-[2px]">
        H: 169, W: 558 pt.
      </div>
    </div>

    <Taskbar />
  </div>
);

export default App;
